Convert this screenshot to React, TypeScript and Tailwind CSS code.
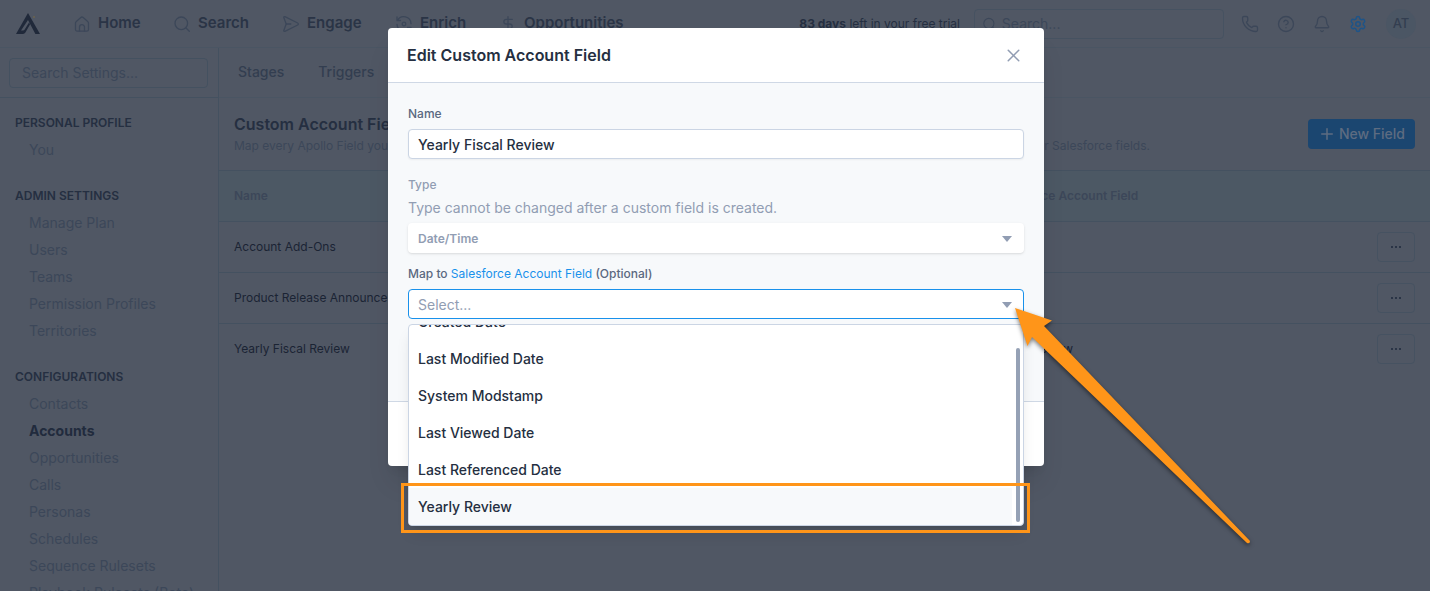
import React from 'react';
import { Bell, CircleHelp, Phone, Plus, Settings, X } from 'lucide-react';

type IconProps = { className?: string };

/* Icons */
const strokeProps = {
  width: 16,
  height: 16,
  viewBox: '0 0 16 16',
  fill: 'none',
  stroke: 'currentColor',
  strokeWidth: 1.3,
  strokeLinecap: 'round' as const,
  strokeLinejoin: 'round' as const,
};

function Logo() {
  return (
    <svg width="24" height="21" viewBox="0 0 24 21" aria-hidden="true">
      <path
        d="M12 0 24 21h-4.600L12 7 5 17.500h2c.8 0 1.300-.4 1.700-1L13 9.500l1 2-4.600 8A3 3 0 0 1 7 21H0Z"
        fill="#20293a"
      />
      <circle cx="18" cy="4" r="1.1" fill="#6b6450" />
    </svg>
  );
}

function HomeIcon({ className }: IconProps) {
  return (
    <svg {...strokeProps} className={className}>
      <path d="M1.500 7.200c0-.7.3-1.300.8-1.700l4.500-4a1.800 1.800 0 0 1 2.400 0l4.500 4c.5.4.8 1 .8 1.700v6.300c0 .9-.7 1.600-1.600 1.600H3.100c-.9 0-1.600-.7-1.600-1.600Z" />
      <path d="M5.500 15v-3.800a2.500 2.500 0 0 1 5 0V15" />
    </svg>
  );
}

function SearchIcon({ className }: IconProps) {
  return (
    <svg {...strokeProps} className={className}>
      <circle cx="7.3" cy="7.3" r="6.300" />
      <path d="m12 12 3.300 3.300" />
    </svg>
  );
}

function SendIcon({ className }: IconProps) {
  return (
    <svg {...strokeProps} className={className}>
      <path d="M.8 1.600C.6.900 1.200.400 1.900.700l12.800 6.300c.8.4.8 1.600 0 2L1.900 15.300c-.7.3-1.300-.2-1.100-.9L3.200 8Z" />
      <path d="M3.200 8h4.600" />
    </svg>
  );
}

function EnrichIcon({ className }: IconProps) {
  return (
    <svg {...strokeProps} className={className}>
      <path d="M1 1v3.500h3.500M1.500 4.500A7.200 7.200 0 0 1 15 7.600M15 15v-3.500h-3.500M14.500 11.500A7.200 7.200 0 0 1 1 8.400" />
      <circle cx="8" cy="8" r="1.800" />
    </svg>
  );
}

function DollarIcon({ className }: IconProps) {
  return (
    <svg {...strokeProps} className={className}>
      <path d="M8 .7v14.600M12.300 3.300H6.200a2.350 2.350 0 0 0 0 4.700h3.600a2.350 2.350 0 0 1 0 4.700H3.300" />
    </svg>
  );
}

function Caret() {
  return (
    <span className="pointer-events-none absolute right-3 top-[13px] border-x-[5px] border-t-[6px] border-x-transparent border-t-[#919db3]" />
  );
}

/* Data */
const navItems = [
  { label: 'Home', icon: HomeIcon, width: 'w-[100px]' },
  { label: 'Search', icon: SearchIcon, width: 'w-[109px]' },
  { label: 'Engage', icon: SendIcon, width: 'w-[113px]' },
  { label: 'Enrich', icon: EnrichIcon, width: 'w-[104px]' },
  { label: 'Opportunities', icon: DollarIcon, width: 'w-[130px]' },
];

const sections = [
  { title: 'PERSONAL PROFILE', items: ['You'] },
  {
    title: 'ADMIN SETTINGS',
    items: ['Manage Plan', 'Users', 'Teams', 'Permission Profiles', 'Territories'],
  },
  {
    title: 'CONFIGURATIONS',
    items: [
      'Contacts',
      'Accounts',
      'Opportunities',
      'Calls',
      'Personas',
      'Schedules',
      'Sequence Rulesets',
      'Playbook Rulesets (Beta)',
    ],
  },
];

const rows = [
  { name: 'Account Add-Ons', mapped: '' },
  { name: 'Product Release Announcement', mapped: '' },
  { name: 'Yearly Fiscal Review', mapped: 'Yearly Review' },
];

const options = [
  'Created Date',
  'Last Modified Date',
  'System Modstamp',
  'Last Viewed Date',
  'Last Referenced Date',
  'Yearly Review',
];

function TopBar() {
  return (
    <header className="flex h-12 shrink-0 items-center border-b border-[#4a5563] pl-4 pr-3.5">
      <a href="#" aria-label="Dashboard" className="w-[58px]">
        <Logo />
      </a>
      <nav className="flex">
        {navItems.map(({ label, icon: Icon, width }) => (
          <a
            key={label}
            href="#"
            className={`flex items-center gap-2 text-[15px] font-semibold text-[#2a3446] ${width}`}
          >
            <Icon className="text-[#3c4759]" />
            {label}
          </a>
        ))}
      </nav>
      <div className="ml-auto flex items-center">
        <p className="mr-3.5 text-xs text-[#252f41]">
          <b className="font-bold">83 days</b> left in your free trial
        </p>
        <label className="flex h-[30px] w-[250px] items-center gap-1.5 rounded-sm border border-[#465261] px-2">
          <SearchIcon className="size-3.5 text-[#3c4759]" />
          <input
            aria-label="Search"
            placeholder="Search..."
            className="w-full bg-transparent text-sm outline-none placeholder:text-[#3c4759]"
          />
        </label>
        <div className="ml-[17px] flex gap-[18px] text-[#3c4759]">
          <button aria-label="Calls"><Phone className="size-[18px] stroke-[1.75]" /></button>
          <button aria-label="Help"><CircleHelp className="size-[18px] stroke-[1.75]" /></button>
          <button aria-label="Notifications"><Bell className="size-[18px] stroke-[1.75]" /></button>
          <button aria-label="Settings"><Settings className="size-[18px] stroke-2 text-[#1e5488]" /></button>
        </div>
        <button className="ml-[19px] size-[30px] rounded-full bg-[#4b5664] text-[13px] font-medium text-[#333e50]">
          AT
        </button>
      </div>
    </header>
  );
}

function Sidebar() {
  return (
    <aside className="w-[219px] shrink-0 border-r border-[#445160]">
      <div className="flex h-[50px] items-center border-b border-[#445160] pl-[9px] pr-2.5">
        <input
          aria-label="Search settings"
          placeholder="Search Settings..."
          className="h-[30px] w-full rounded-sm border border-[#445160] px-3 text-sm outline-none placeholder:text-[#3c4759]"
        />
      </div>
      <div className="flex flex-col gap-[19px] pt-[11px]">
        {sections.map((section) => (
          <section key={section.title}>
            <h2 className="pl-[15px] text-xs font-semibold leading-[27px] text-[#252f41]">
              {section.title}
            </h2>
            {section.items.map((item) => (
              <a
                key={item}
                href="#"
                className={`block pl-[29px] text-sm leading-[27px] ${
                  item === 'Accounts' ? 'font-bold text-[#212b3d]' : 'text-[#3c4759]'
                }`}
              >
                {item}
              </a>
            ))}
          </section>
        ))}
      </div>
    </aside>
  );
}

function FieldsPage() {
  return (
    <main className="min-w-0 flex-1">
      <nav className="flex h-[50px] items-center gap-[34px] border-b border-[#4a5563] pb-0.5 pl-[19px] text-sm font-medium text-[#333e50]">
        <a href="#">Stages</a>
        <a href="#">Triggers</a>
      </nav>
      <div className="flex h-[73px] items-center justify-between border-b border-[#445160] px-[15px]">
        <div>
          <h1 className="text-base font-semibold leading-6 text-[#252f41]">Custom Account Fields</h1>
          <div className="flex text-xs leading-5 text-[#3c4759]">
            <p className="w-[775px]">Map every Apollo Field you want to push or pull</p>
            <p>to your Salesforce fields.</p>
          </div>
        </div>
        <button className="flex h-[30px] items-center gap-[3px] rounded bg-[#1b4670] px-2.5 text-sm font-medium text-[#5e6c81]">
          <Plus className="size-[18px]" />
          New Field
        </button>
      </div>
      <table className="w-full table-fixed text-left text-xs text-[#1b2434]">
        <thead>
          <tr className="h-[50px] border-b border-[#445160] bg-[#4c5864] text-[#3c4759]">
            <th className="w-7/11 pl-[15px] font-semibold">Name</th>
            <th className="pl-1 font-semibold">Salesforce Account Field</th>
            <th className="w-[68px]" aria-label="Actions" />
          </tr>
        </thead>
        <tbody>
          {rows.map((row) => (
            <tr key={row.name} className="h-[51px] border-b border-[#445160] last:border-0">
              <td className="pl-[15px]">{row.name}</td>
              <td className="pl-1">{row.mapped}</td>
              <td className="pr-[15px]">
                <button
                  aria-label="More"
                  className="ml-auto flex h-[30px] w-[38px] items-center justify-center gap-0.5 rounded-sm border border-[#465261]"
                >
                  <i className="size-0.5 bg-[#2a3446]" />
                  <i className="size-0.5 bg-[#2a3446]" />
                  <i className="size-0.5 bg-[#2a3446]" />
                </button>
              </td>
            </tr>
          ))}
        </tbody>
      </table>
    </main>
  );
}

function OptionsMenu() {
  return (
    <div className="absolute inset-x-0 top-[35px]">
      <div className="flex h-[202px] overflow-hidden rounded border border-[#cbd5e4] bg-white shadow-lg">
        <ul
          id="options"
          role="listbox"
          aria-label="Salesforce fields"
          className="flex flex-1 flex-col justify-end"
        >
          {options.map((option) => (
            <li
              key={option}
              role="option"
              aria-selected={option === 'Yearly Review'}
              className="shrink-0 px-[9px] text-sm font-medium leading-[37px] text-[#252f41] aria-selected:bg-[#f7f9fb]"
            >
              {option}
            </li>
          ))}
        </ul>
        <div className="flex w-[11px] items-end justify-center pb-[3px]">
          <div className="h-[174px] w-1 rounded-full bg-[#95a1b5]" />
        </div>
      </div>
      <div className="absolute -bottom-[7px] -left-[7px] -right-[6px] h-[50px] border-[3px] border-[#ff9519]" />
    </div>
  );
}

function Pointer() {
  return (
    <svg
      className="pointer-events-none absolute -right-[230px] top-[17px] drop-shadow-[0_2px_2px_rgba(0,0,0,0.5)]"
      width="240"
      height="240"
      viewBox="0 0 240 240"
      aria-hidden="true"
    >
      <path d="M1 2 38 14.500 30 20 236 235Q236 238 233 237L18 31 13.500 40Z" fill="#ff9519" />
    </svg>
  );
}

function EditFieldModal() {
  return (
    <div className="absolute inset-0 flex items-start justify-center pl-0.5 pt-7">
      <div role="dialog" aria-label="Edit Custom Account Field" className="w-[656px] rounded bg-white shadow-xl">
        <div className="flex h-[55px] items-center justify-between border-b border-[#cfd8e5] pl-[19px] pr-5">
          <h2 className="text-base font-semibold text-[#252f41]">Edit Custom Account Field</h2>
          <button aria-label="Close" className="text-[#919db3]">
            <X className="size-[21px] stroke-[1.75]" />
          </button>
        </div>
        <form className="h-[319px] border-b border-[#cfd8e5] bg-[#f7f9fb] px-5 pt-[21px] text-xs font-medium text-[#5a6880]">
          <label htmlFor="name" className="block leading-5">Name</label>
          <input
            id="name"
            defaultValue="Yearly Fiscal Review"
            className="mt-[5px] h-[30px] w-full rounded-sm border border-[#cbd5e4] bg-white px-[9px] text-sm font-medium text-[#252f41] shadow-xs outline-none"
          />
          <label htmlFor="type" className="mt-4 block leading-5 text-[#919db3]">Type</label>
          <p className="mt-[3px] text-sm font-normal leading-5 text-[#919db3]">
            Type cannot be changed after a custom field is created.
          </p>
          <div className="relative mt-[5px]">
            <select
              id="type"
              disabled
              className="h-[30px] w-full appearance-none rounded-sm bg-white px-2.5 pt-px text-xs font-semibold text-[#919db3] opacity-100 shadow-sm"
            >
              <option>Date/Time</option>
            </select>
            <Caret />
          </div>
          <label htmlFor="mapping" className="mt-[11px] block leading-5">
            Map to <a href="#" className="font-normal text-[#1991eb]">Salesforce Account Field</a> (Optional)
          </label>
          <div className="relative mt-[5px]">
            <input
              id="mapping"
              role="combobox"
              aria-expanded="true"
              aria-controls="options"
              placeholder="Select..."
              className="h-[30px] w-full rounded-sm border border-[#1991eb] bg-white px-[9px] text-sm font-normal outline-none placeholder:text-[#919db3]"
            />
            <Caret />
            <OptionsMenu />
            <Pointer />
          </div>
        </form>
        <div className="h-16" />
      </div>
    </div>
  );
}

export default function App() {
  return (
    <div className="relative flex h-screen flex-col overflow-hidden bg-[#505764] font-[Inter,sans-serif]">
      <TopBar />
      <div className="flex min-h-0 flex-1">
        <Sidebar />
        <FieldsPage />
      </div>
      <EditFieldModal />
    </div>
  );
}
